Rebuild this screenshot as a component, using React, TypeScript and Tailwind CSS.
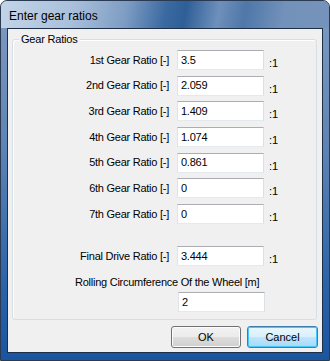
import React from "react";

const labelFont = { fontFamily: '"Liberation Sans", Arial, sans-serif' };

function Field({ value }: { value: string }) {
  return (
    <div className="relative h-[20px] w-[87px] bg-white border border-t-[#abadb3] border-l-[#e2e3ea] border-r-[#dbdfe6] border-b-[#e3e9ef] flex items-center pl-[3px] text-[11px] tracking-[-0.25px] text-black">
      {value}
    </div>
  );
}

function Row({ label, value }: { label: string; value: string }) {
  return (
    <div className="flex items-start h-[20px]">
      <div className="w-[157px] h-[20px] flex items-center justify-end text-[11px] tracking-[-0.25px] text-black pr-[1px]">
        {label}
      </div>
      <div className="ml-[7px]">
        <Field value={value} />
      </div>
      <div className="ml-[5px] mt-[5px] text-[11px] text-black">:1</div>
    </div>
  );
}

export default function App() {
  const gears = [
    ["1st Gear Ratio [-]", "3.5"],
    ["2nd Gear Ratio [-]", "2.059"],
    ["3rd Gear Ratio [-]", "1.409"],
    ["4th Gear Ratio [-]", "1.074"],
    ["5th Gear Ratio [-]", "0.861"],
    ["6th Gear Ratio [-]", "0"],
    ["7th Gear Ratio [-]", "0"],
  ];
  return (
    <div
      className="w-[330px] h-[361px] flex flex-col rounded-t-[7px] border border-[#2a3a52] bg-[linear-gradient(to_bottom,#7f9cc2_0%,#5f84b4_40%,#2a62a8_80%,#1a55a0_100%)] overflow-hidden"
      style={labelFont}
    >
      <div className="h-[27px] shrink-0 flex items-center pl-[8px] pt-[2px] bg-[linear-gradient(100deg,#c3d4e8_0%,#a9c0db_22%,#7e9dc4_38%,#3b6aa1_50%,#2f5f97_56%,#6e90bb_66%,#4f77a8_74%,#7392bb_86%,#7593ba_100%)]">
        <span className="text-[12px] text-black">Enter gear ratios</span>
      </div>
      <div className="flex-1 mx-[6px] mb-[7px] border border-[#1e2f48] bg-[#f0f0f0] flex flex-col">
        <div className="relative mt-[10px] ml-[4px] mr-[5px] h-[281px] border border-[#d5dfe5] rounded-[3px] shadow-[inset_1px_1px_0_#ffffff]">
          <div className="absolute left-[6px] top-[-8px] px-[2px] bg-[#f0f0f0] text-[11px] tracking-[-0.2px] text-black leading-[14px]">
            Gear Ratios
          </div>
          <div className="flex flex-col gap-[5.67px] pt-[10px]">
            {gears.map(([l, v]) => (
              <Row key={l} label={l} value={v} />
            ))}
          </div>
          <div className="mt-[22px]">
            <Row label="Final Drive Ratio [-]" value="3.444" />
          </div>
          <div className="mt-[9px] ml-[62px] text-[11px] tracking-[-0.25px] text-black leading-[14px]">
            Rolling Circumference Of the Wheel [m]
          </div>
          <div className="mt-[3px] ml-[165px]">
            <Field value="2" />
          </div>
        </div>
        <div className="flex justify-end gap-[6px] mt-[6px] mr-[4px]">
          <button className="w-[70px] h-[22px] rounded-[3px] border border-[#707070] bg-[linear-gradient(to_bottom,#f2f2f2_0%,#ebebeb_50%,#dddddd_50%,#cfcfcf_100%)] text-[11px] text-black shadow-[inset_0_0_0_1px_#fcfcfc]">
            OK
          </button>
          <button className="w-[71px] h-[22px] rounded-[3px] border border-[#3c7fb1] bg-[linear-gradient(to_bottom,#eaf6fd_0%,#d9f0fc_50%,#bee6fd_50%,#a7d9f5_100%)] text-[11px] text-black shadow-[inset_0_0_0_1px_#48c6f9]">
            Cancel
          </button>
        </div>
      </div>
    </div>
  );
}
